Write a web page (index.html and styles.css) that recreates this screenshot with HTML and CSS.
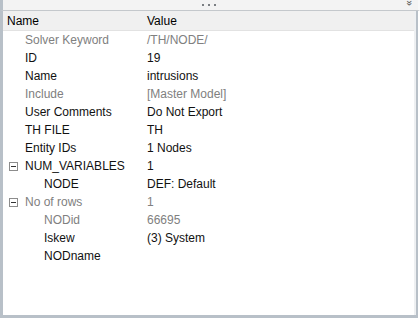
FILE: index.html
```html
<!DOCTYPE html>
<html lang="en">
<head>
    <meta charset="UTF-8">
    <title>Entity Editor</title>
    <link rel="stylesheet" href="styles.css">
</head>
<body>
    <div class="frame">
        <div class="titlebar">
            <span class="grip"><i></i><i></i><i></i></span>
            <span class="collapse">&raquo;</span>
        </div>
        <div class="panel">
            <div class="grid">
                <div class="header">
                    <div class="col-name">Name</div>
                    <div class="col-value">Value</div>
                </div>
                <div class="row muted"><div class="col-name indent1">Solver Keyword</div><div class="col-value">/TH/NODE/</div></div>
                <div class="row"><div class="col-name indent1">ID</div><div class="col-value">19</div></div>
                <div class="row"><div class="col-name indent1">Name</div><div class="col-value">intrusions</div></div>
                <div class="row muted"><div class="col-name indent1">Include</div><div class="col-value">[Master Model]</div></div>
                <div class="row"><div class="col-name indent1">User Comments</div><div class="col-value">Do Not Export</div></div>
                <div class="row"><div class="col-name indent1">TH FILE</div><div class="col-value">TH</div></div>
                <div class="row"><div class="col-name indent1">Entity IDs</div><div class="col-value">1 Nodes</div></div>
                <div class="row"><div class="col-name"><span class="toggle"></span>NUM_VARIABLES</div><div class="col-value">1</div></div>
                <div class="row"><div class="col-name indent2">NODE</div><div class="col-value">DEF: Default</div></div>
                <div class="row muted"><div class="col-name"><span class="toggle"></span>No of rows</div><div class="col-value">1</div></div>
                <div class="row muted"><div class="col-name indent2">NODid</div><div class="col-value">66695</div></div>
                <div class="row"><div class="col-name indent2">Iskew</div><div class="col-value">(3) System</div></div>
                <div class="row"><div class="col-name indent2">NODname</div><div class="col-value"></div></div>
            </div>
            <div class="vscroll"></div>
        </div>
    </div>
</body>
</html>
```

FILE: styles.css
```css
html, body {
    margin: 0;
    padding: 0;
    background: #ffffff;
}

body {
    font-family: "Segoe UI", "Liberation Sans", Arial, sans-serif;
    font-size: 12px;
    width: 420px;
    height: 318px;
    overflow: hidden;
}

.frame {
    width: 420px;
    height: 318px;
    display: flex;
    flex-direction: column;
    box-sizing: border-box;
}

.titlebar {
    height: 10px;
    background: #f3f3f3;
    border-bottom: 1px solid #c4c8cc;
    border-left: 3px solid #b8c0c8;
    border-right: 2px solid #f8f8f8;
    display: flex;
    align-items: center;
    justify-content: center;
    position: relative;
}

.grip {
    display: flex;
    gap: 4px;
    margin-left: -4px;
}

.grip i {
    width: 2px;
    height: 2px;
    background: #7a7e82;
}

.collapse {
    position: absolute;
    right: 6px;
    top: -4px;
    font-size: 10px;
    color: #555;
    transform: rotate(90deg);
    line-height: 14px;
}

.panel {
    flex: 1;
    display: flex;
    border-left: 3px solid #b8c0c8;
    border-right: 2px solid #b8c0c8;
    border-bottom: 3px solid #b8c0c8;
    margin-right: 2px;
}

.grid {
    flex: 1;
    display: flex;
    flex-direction: column;
}

.vscroll {
    width: 2px;
    background: #eef0f2;
}

.header {
    display: flex;
    height: 19px;
    align-items: center;
    background: #f0f0f0;
    border-bottom: 1px solid #e2e2e2;
    color: #000;
}

.header .col-name {
    padding-left: 4px;
}

.row {
    display: flex;
    height: 18px;
    align-items: center;
    color: #111;
}

.row.muted {
    color: #808080;
}

.col-name {
    width: 144px;
    flex-shrink: 0;
    box-sizing: border-box;
    display: flex;
    align-items: center;
    white-space: nowrap;
}

.col-value {
    white-space: nowrap;
}

.indent1 {
    padding-left: 22px;
}

.indent2 {
    padding-left: 41px;
}

.toggle {
    width: 7px;
    height: 7px;
    border: 1px solid #8c8c8c;
    margin-left: 6px;
    margin-right: 7px;
    position: relative;
    box-sizing: content-box;
}

.toggle::after {
    content: "";
    position: absolute;
    left: 1px;
    top: 3px;
    width: 5px;
    height: 1px;
    background: #333;
}
```
